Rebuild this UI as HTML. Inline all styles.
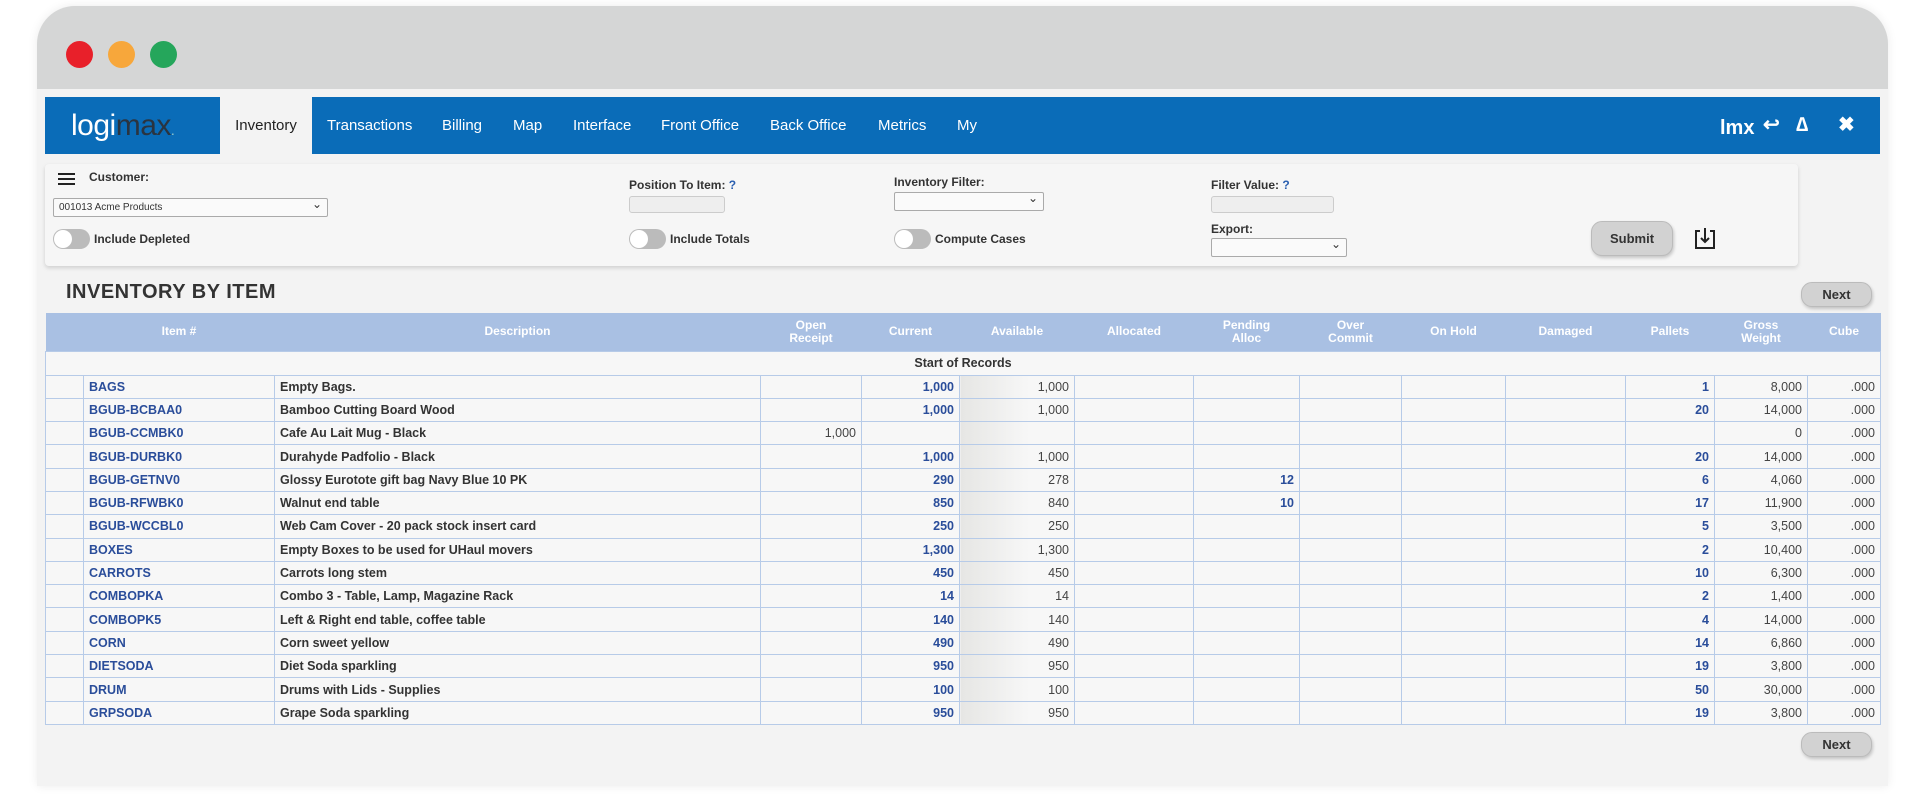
<!DOCTYPE html>
<html><head><meta charset="utf-8"><style>
*{box-sizing:border-box;margin:0;padding:0}
body{width:1920px;height:800px;background:#fff;font-family:"Liberation Sans Narrow","Liberation Sans",Arial,sans-serif;position:relative;overflow:hidden}
.win{position:absolute;left:37px;top:6px;width:1851px;height:780px;border-radius:38px 38px 0 0;background:#f3f3f3;overflow:hidden;box-shadow:0 0 10px rgba(0,0,0,.08)}
.title{position:absolute;left:0;top:0;width:100%;height:83px;background:#d5d6d6}
.dot{position:absolute;top:35px;width:27px;height:27px;border-radius:50%}
.nav{position:absolute;left:8px;top:91px;width:1835px;height:57px;background:#0a6cb8}
.logo{position:absolute;left:0;top:0;width:175px;height:57px;font-family:"Liberation Sans",sans-serif;font-size:30px;color:#fff;padding:12px 0 0 26px;letter-spacing:-.5px}
.logo span{color:#2a3440}
.tab{position:absolute;left:175px;top:0;width:92px;height:57px;background:#f3f3f3;color:#222;font-size:15px;text-align:center;line-height:57px;font-family:"Liberation Sans",sans-serif}
.nl{position:absolute;top:0;line-height:57px;color:#fff;font-size:15px;font-family:"Liberation Sans",sans-serif}
.panel{position:absolute;left:8px;top:158px;width:1753px;height:102px;background:#f6f6f6;border-radius:4px;box-shadow:0 2px 4px rgba(0,0,0,.15)}
.lb{position:absolute;font-size:12px;font-weight:bold;color:#333}
.inp{position:absolute;height:17px;border:1px solid #ccc;border-radius:3px;background:#eee}
.sel{position:absolute;height:19px;border:1px solid #aaa;border-radius:2px;background:#fafafa;font-size:10px;color:#333;padding:3px 5px}
.sel:after{content:"⌄";position:absolute;right:5px;top:-2px;font-size:12px}
.tog{position:absolute;width:37px;height:20px;border-radius:10px;background:#bbb}
.tog:before{content:"";position:absolute;left:1px;top:1px;width:18px;height:18px;border-radius:50%;background:#fff}
.btn{position:absolute;background:#d2d2d2;border:1px solid #bbb;border-radius:11px;font-weight:bold;color:#333;font-size:13px;text-align:center;box-shadow:1px 2px 3px rgba(0,0,0,.2)}
h1{position:absolute;left:29px;top:275px;font-size:20px;color:#333;font-family:"Liberation Sans",sans-serif;letter-spacing:.5px}
table{position:absolute;left:8px;top:307px;width:1835px;border-collapse:collapse;table-layout:fixed;font-size:12.5px;font-weight:bold}
th{background:#a9c0e3;color:#fff;height:38px;font-size:12px;line-height:13px;border:none}
td{border:1px solid #b7cbe8;height:23.3px;padding:0 5px;color:#333;background:#f7f7f7;white-space:nowrap;overflow:hidden}
td.r{text-align:right}
td.b{color:#2a4d9a}
td.av{background:linear-gradient(90deg,#e6e6e4,#f7f7f7 60%);font-weight:normal;color:#444}
td.n{font-weight:normal;color:#444}
</style></head><body>
<div class="win">
 <div class="title">
  <div class="dot" style="left:29px;background:#e8202a"></div>
  <div class="dot" style="left:71px;background:#f7a73b"></div>
  <div class="dot" style="left:113px;background:#25a65b"></div>
 </div>
 <div class="nav">
  <div class="logo">logi<span>max</span><span style="color:#9cc;font-size:14px">.</span></div>
  <div class="tab">Inventory</div>
  <div class="nl" style="left:282px">Transactions</div>
  <div class="nl" style="left:397px">Billing</div>
  <div class="nl" style="left:468px">Map</div>
  <div class="nl" style="left:528px">Interface</div>
  <div class="nl" style="left:616px">Front Office</div>
  <div class="nl" style="left:725px">Back Office</div>
  <div class="nl" style="left:833px">Metrics</div>
  <div class="nl" style="left:912px">My</div>
  <div class="nl" style="left:1675px;font-size:20px;font-weight:bold;top:3px">lmx</div>
  <div class="nl" style="left:1718px;font-size:20px;font-weight:bold">↩</div>
  <div class="nl" style="left:1751px;font-size:20px;font-weight:bold">∆</div>
  <div class="nl" style="left:1793px;font-size:20px;font-weight:bold">✖</div>
 </div>
 <div class="panel">
  <div style="position:absolute;left:13px;top:9px;width:17px;height:2px;background:#222;box-shadow:0 5px 0 #222,0 10px 0 #222"></div>
  <div class="lb" style="left:44px;top:6px">Customer:</div>
  <div class="sel" style="left:8px;top:34px;width:275px">001013 Acme Products</div>
  <div class="tog" style="left:8px;top:65px"></div>
  <div class="lb" style="left:49px;top:68px">Include Depleted</div>
  <div class="lb" style="left:584px;top:14px">Position To Item: <span style="color:#2a5fb0">?</span></div>
  <div class="inp" style="left:584px;top:32px;width:96px"></div>
  <div class="tog" style="left:584px;top:65px"></div>
  <div class="lb" style="left:625px;top:68px">Include Totals</div>
  <div class="lb" style="left:849px;top:11px">Inventory Filter:</div>
  <div class="sel" style="left:849px;top:28px;width:150px"></div>
  <div class="tog" style="left:849px;top:65px"></div>
  <div class="lb" style="left:890px;top:68px">Compute Cases</div>
  <div class="lb" style="left:1166px;top:14px">Filter Value: <span style="color:#2a5fb0">?</span></div>
  <div class="inp" style="left:1166px;top:32px;width:123px"></div>
  <div class="lb" style="left:1166px;top:58px">Export:</div>
  <div class="sel" style="left:1166px;top:74px;width:136px"></div>
  <div class="btn" style="left:1546px;top:57px;width:82px;height:35px;line-height:33px">Submit</div>
  <svg style="position:absolute;left:1648px;top:61px" width="24" height="26" viewBox="0 0 24 26" fill="none" stroke="#222" stroke-width="2"><path d="M7 6H3v17h18V6h-4"/><path d="M12 3v14M8 13l4 4 4-4"/></svg>
 </div>
 <h1>INVENTORY BY ITEM</h1>
 <div class="btn" style="left:1764px;top:276px;width:71px;height:25px;line-height:23px">Next</div>
 <table>
 <colgroup><col style="width:38px"><col style="width:191px"><col style="width:486px"><col style="width:101px"><col style="width:98px"><col style="width:115px"><col style="width:119px"><col style="width:106px"><col style="width:102px"><col style="width:104px"><col style="width:120px"><col style="width:89px"><col style="width:93px"><col style="width:73px"></colgroup>
 <tr><th></th><th>Item #</th><th>Description</th><th>Open<br>Receipt</th><th>Current</th><th>Available</th><th>Allocated</th><th>Pending<br>Alloc</th><th>Over<br>Commit</th><th>On Hold</th><th>Damaged</th><th>Pallets</th><th>Gross<br>Weight</th><th>Cube</th></tr>
 <tr><td colspan="14" style="text-align:center;height:24px">Start of Records</td></tr>
 <tr><td></td><td class="b">BAGS</td><td>Empty Bags.</td><td></td><td class="r b">1,000</td><td class="r av">1,000</td><td></td><td></td><td></td><td></td><td></td><td class="r b">1</td><td class="r n">8,000</td><td class="r n">.000</td></tr>
 <tr><td></td><td class="b">BGUB-BCBAA0</td><td>Bamboo Cutting Board Wood</td><td></td><td class="r b">1,000</td><td class="r av">1,000</td><td></td><td></td><td></td><td></td><td></td><td class="r b">20</td><td class="r n">14,000</td><td class="r n">.000</td></tr>
 <tr><td></td><td class="b">BGUB-CCMBK0</td><td>Cafe Au Lait Mug - Black</td><td class="r n">1,000</td><td></td><td class="r av"></td><td></td><td></td><td></td><td></td><td></td><td></td><td class="r n">0</td><td class="r n">.000</td></tr>
 <tr><td></td><td class="b">BGUB-DURBK0</td><td>Durahyde Padfolio - Black</td><td></td><td class="r b">1,000</td><td class="r av">1,000</td><td></td><td></td><td></td><td></td><td></td><td class="r b">20</td><td class="r n">14,000</td><td class="r n">.000</td></tr>
 <tr><td></td><td class="b">BGUB-GETNV0</td><td>Glossy Eurotote gift bag Navy Blue 10 PK</td><td></td><td class="r b">290</td><td class="r av">278</td><td></td><td class="r b">12</td><td></td><td></td><td></td><td class="r b">6</td><td class="r n">4,060</td><td class="r n">.000</td></tr>
 <tr><td></td><td class="b">BGUB-RFWBK0</td><td>Walnut end table</td><td></td><td class="r b">850</td><td class="r av">840</td><td></td><td class="r b">10</td><td></td><td></td><td></td><td class="r b">17</td><td class="r n">11,900</td><td class="r n">.000</td></tr>
 <tr><td></td><td class="b">BGUB-WCCBL0</td><td>Web Cam Cover - 20 pack stock insert card</td><td></td><td class="r b">250</td><td class="r av">250</td><td></td><td></td><td></td><td></td><td></td><td class="r b">5</td><td class="r n">3,500</td><td class="r n">.000</td></tr>
 <tr><td></td><td class="b">BOXES</td><td>Empty Boxes to be used for UHaul movers</td><td></td><td class="r b">1,300</td><td class="r av">1,300</td><td></td><td></td><td></td><td></td><td></td><td class="r b">2</td><td class="r n">10,400</td><td class="r n">.000</td></tr>
 <tr><td></td><td class="b">CARROTS</td><td>Carrots long stem</td><td></td><td class="r b">450</td><td class="r av">450</td><td></td><td></td><td></td><td></td><td></td><td class="r b">10</td><td class="r n">6,300</td><td class="r n">.000</td></tr>
 <tr><td></td><td class="b">COMBOPKA</td><td>Combo 3 - Table, Lamp, Magazine Rack</td><td></td><td class="r b">14</td><td class="r av">14</td><td></td><td></td><td></td><td></td><td></td><td class="r b">2</td><td class="r n">1,400</td><td class="r n">.000</td></tr>
 <tr><td></td><td class="b">COMBOPK5</td><td>Left &amp; Right end table, coffee table</td><td></td><td class="r b">140</td><td class="r av">140</td><td></td><td></td><td></td><td></td><td></td><td class="r b">4</td><td class="r n">14,000</td><td class="r n">.000</td></tr>
 <tr><td></td><td class="b">CORN</td><td>Corn sweet yellow</td><td></td><td class="r b">490</td><td class="r av">490</td><td></td><td></td><td></td><td></td><td></td><td class="r b">14</td><td class="r n">6,860</td><td class="r n">.000</td></tr>
 <tr><td></td><td class="b">DIETSODA</td><td>Diet Soda sparkling</td><td></td><td class="r b">950</td><td class="r av">950</td><td></td><td></td><td></td><td></td><td></td><td class="r b">19</td><td class="r n">3,800</td><td class="r n">.000</td></tr>
 <tr><td></td><td class="b">DRUM</td><td>Drums with Lids - Supplies</td><td></td><td class="r b">100</td><td class="r av">100</td><td></td><td></td><td></td><td></td><td></td><td class="r b">50</td><td class="r n">30,000</td><td class="r n">.000</td></tr>
 <tr><td></td><td class="b">GRPSODA</td><td>Grape Soda sparkling</td><td></td><td class="r b">950</td><td class="r av">950</td><td></td><td></td><td></td><td></td><td></td><td class="r b">19</td><td class="r n">3,800</td><td class="r n">.000</td></tr>
 </table>
 <div class="btn" style="left:1764px;top:726px;width:71px;height:25px;line-height:23px">Next</div>
</div>
</body></html>
